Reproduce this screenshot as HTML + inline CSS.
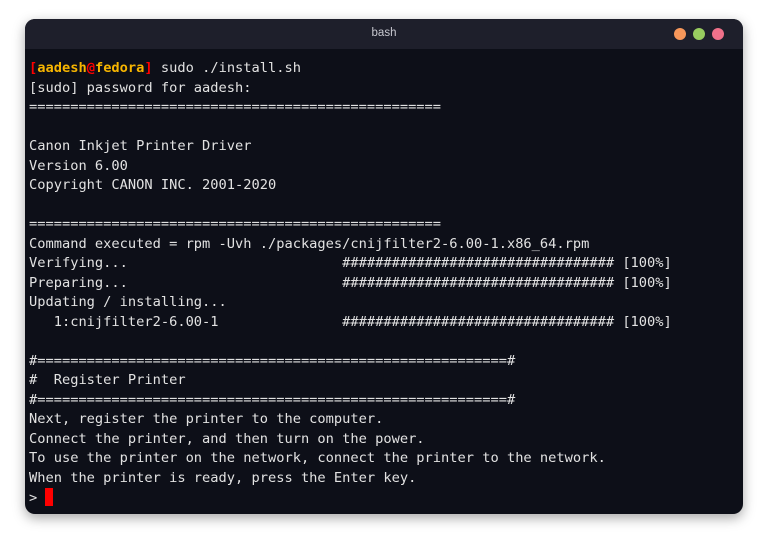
<!DOCTYPE html>
<html><head><meta charset="utf-8"><style>
html,body{margin:0;padding:0;background:#fff;width:768px;height:546px;overflow:hidden}
.win{position:absolute;left:25px;top:19px;width:718px;height:495px;border-radius:10px;background:#0d0f18;box-shadow:0 4px 12px rgba(0,0,0,.35);overflow:hidden}
.tb{height:30px;background:#1e1f2b;position:relative}
.tb .t{position:absolute;left:0;right:0;top:8px;text-align:center;color:#c8c8d0;font:11.5px "Liberation Sans",sans-serif}
.dot{position:absolute;top:9px;width:12px;height:12px;border-radius:50%}
pre{margin:0;position:absolute;left:4px;top:40px;font-family:"DejaVu Sans Mono",monospace;font-size:13.7px;line-height:19.5px;color:#e2e2e2}
.r{color:#f00;font-weight:bold}.y{color:#f7b500;font-weight:bold}
.cur{display:inline-block;width:8px;height:18px;background:#f00;vertical-align:-4px}
</style></head><body>
<div class="win">
<div class="tb"><div class="t">bash</div>
<div class="dot" style="left:649px;background:#f7975a"></div>
<div class="dot" style="left:668px;background:#98cc5f"></div>
<div class="dot" style="left:687px;background:#f0718a"></div>
</div>
<pre><span class="r">[</span><span class="y">aadesh</span><span class="r">@</span><span class="y">fedora</span><span class="r">]</span> sudo ./install.sh
[sudo] password for aadesh:
==================================================

Canon Inkjet Printer Driver
Version 6.00
Copyright CANON INC. 2001-2020

==================================================
Command executed = rpm -Uvh ./packages/cnijfilter2-6.00-1.x86_64.rpm
Verifying...                          ################################# [100%]
Preparing...                          ################################# [100%]
Updating / installing...
   1:cnijfilter2-6.00-1               ################################# [100%]

#=========================================================#
#  Register Printer
#=========================================================#
Next, register the printer to the computer.
Connect the printer, and then turn on the power.
To use the printer on the network, connect the printer to the network.
When the printer is ready, press the Enter key.
&gt; <span class="cur"></span></pre>
</div>
</body></html>
